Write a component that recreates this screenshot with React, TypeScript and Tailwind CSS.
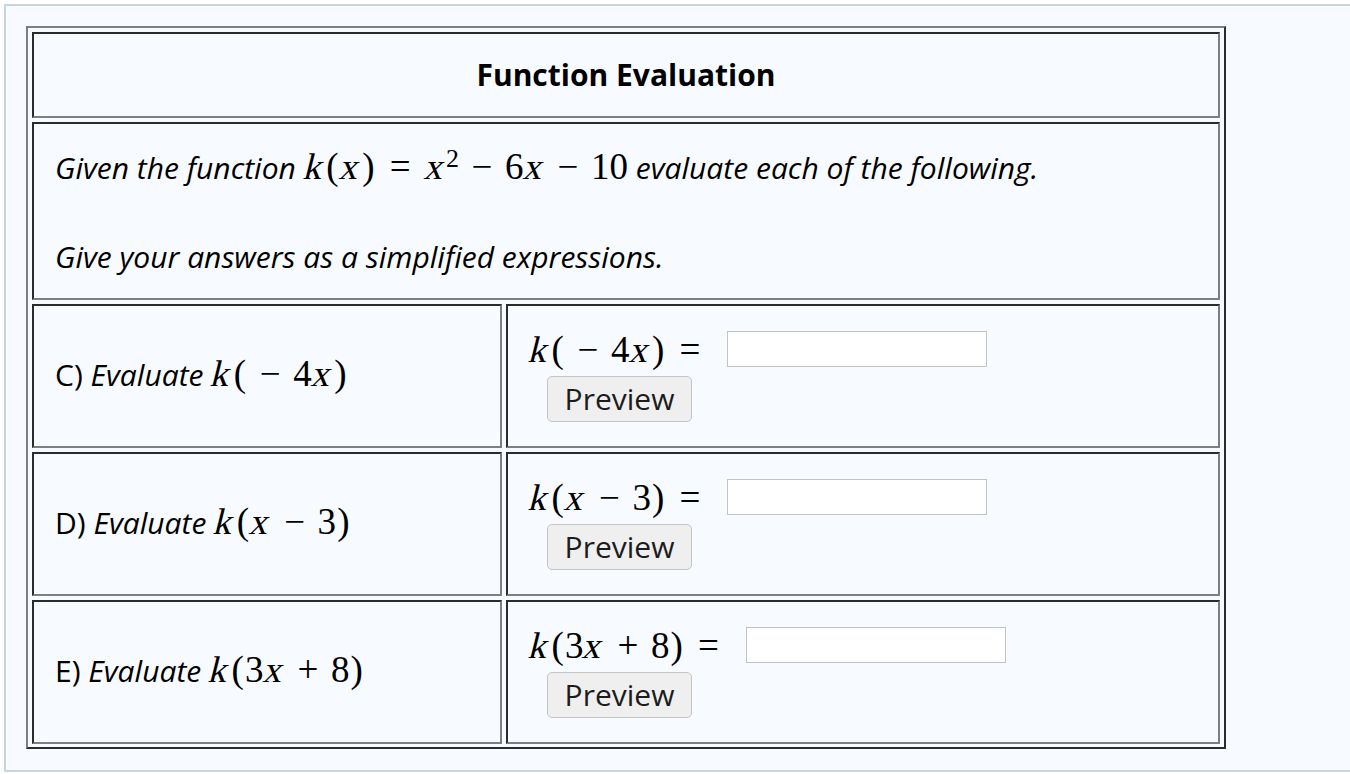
import type { ReactNode } from "react";

const textFont = "font-['Open_Sans','Noto_Sans',sans-serif]";
const mathFont = "font-['Liberation_Serif','DejaVu_Serif',serif] not-italic text-[37px] leading-none";

// table-ish bevel borders: outer is outset, cells are inset
const outset =
  "border-2 border-t-[#7f7f7f] border-l-[#7f7f7f] border-r-[#2b2b2b] border-b-[#2b2b2b]";
const inset =
  "border-2 border-t-[#2b2b2b] border-l-[#2b2b2b] border-r-[#7f7f7f] border-b-[#7f7f7f]";

function M({ children }: { children: ReactNode }) {
  return <span className={`${mathFont} whitespace-nowrap`}>{children}</span>;
}

// math variable: the serif italic face isn't there, so slant it by hand
function V({ children }: { children: ReactNode }) {
  return <span className="inline-block -skew-x-[14deg] px-[0.04em]">{children}</span>;
}

function P({ children }: { children: ReactNode }) {
  return <span className="px-[0.03em]">{children}</span>;
}

function Op({ children }: { children: ReactNode }) {
  return <span className="mx-[0.34em]">{children}</span>;
}

function Rel({ children }: { children: ReactNode }) {
  return <span className="mx-[0.38em]">{children}</span>;
}

type Part = {
  letter: string;
  expr: ReactNode;
};

const parts: Part[] = [
  {
    letter: "C",
    expr: (
      <>
        <V>k</V>
        <P>(</P>
        <Op>−</Op>4<V>x</V>
        <P>)</P>
      </>
    ),
  },
  {
    letter: "D",
    expr: (
      <>
        <V>k</V>
        <P>(</P>
        <V>x</V>
        <Op>−</Op>3<P>)</P>
      </>
    ),
  },
  {
    letter: "E",
    expr: (
      <>
        <V>k</V>
        <P>(</P>3<V>x</V>
        <Op>+</Op>8<P>)</P>
      </>
    ),
  },
];

function PartRow({ part }: { part: Part }) {
  return (
    <div className="flex gap-[4px]">
      <div className={`${inset} flex h-[144px] w-[470px] items-center px-[21px] pb-[4px]`}>
        <span className="text-[30px]">
          {part.letter}) <i>Evaluate</i> <M>{part.expr}</M>
        </span>
      </div>
      <div
        className={`${inset} flex h-[144px] w-[714px] flex-col justify-center px-[21px] pb-[2px]`}
      >
        <div className="flex h-[42px] items-center">
          <M>
            {part.expr}
            <Rel>=</Rel>
          </M>
          <input
            type="text"
            className="ml-[13px] h-[36px] w-[260px] border border-[#c3c3c3] bg-white outline-none"
          />
        </div>
        <div className="mt-[6px] pl-[18px]">
          <button
            type="button"
            className="h-[46px] w-[145px] rounded-[5px] border border-[#c4c4c4] bg-[#efefef] text-[30px] leading-none text-[#1c1c1c]"
          >
            Preview
          </button>
        </div>
      </div>
    </div>
  );
}

export default function App() {
  return (
    <div className={`${textFont} min-h-screen bg-white pl-[4px] pt-[4px] text-black`}>
      <div className="h-[768px] border-2 border-r-0 border-[#c8d5dc] bg-[#f7fbff] pl-[20px] pt-[20px]">
        <div className={`${outset} flex w-[1200px] flex-col gap-[4px] p-[4px] pb-[3px]`}>
          <div className={`${inset} flex h-[86px] items-center justify-center pb-[2px]`}>
            <h1 className="text-[30px] font-bold">Function Evaluation</h1>
          </div>

          <div className={`${inset} flex h-[178px] flex-col px-[21px] pt-[22px]`}>
            <p className="text-[30px] italic leading-[44px]">
              Given the function{" "}
              <M>
                <V>k</V>
                <P>(</P>
                <V>x</V>
                <P>)</P>
                <Rel>=</Rel>
                <V>x</V>
                <sup className="relative -top-[0.45em] text-[0.7em]">2</sup>
                <Op>−</Op>6<V>x</V>
                <Op>−</Op>10
              </M>{" "}
              evaluate each of the following.
            </p>
            <p className="mt-[47px] text-[30px] italic leading-[40px]">
              Give your answers as a simplified expressions.
            </p>
          </div>

          {parts.map((p) => (
            <PartRow key={p.letter} part={p} />
          ))}
        </div>
      </div>
    </div>
  );
}
